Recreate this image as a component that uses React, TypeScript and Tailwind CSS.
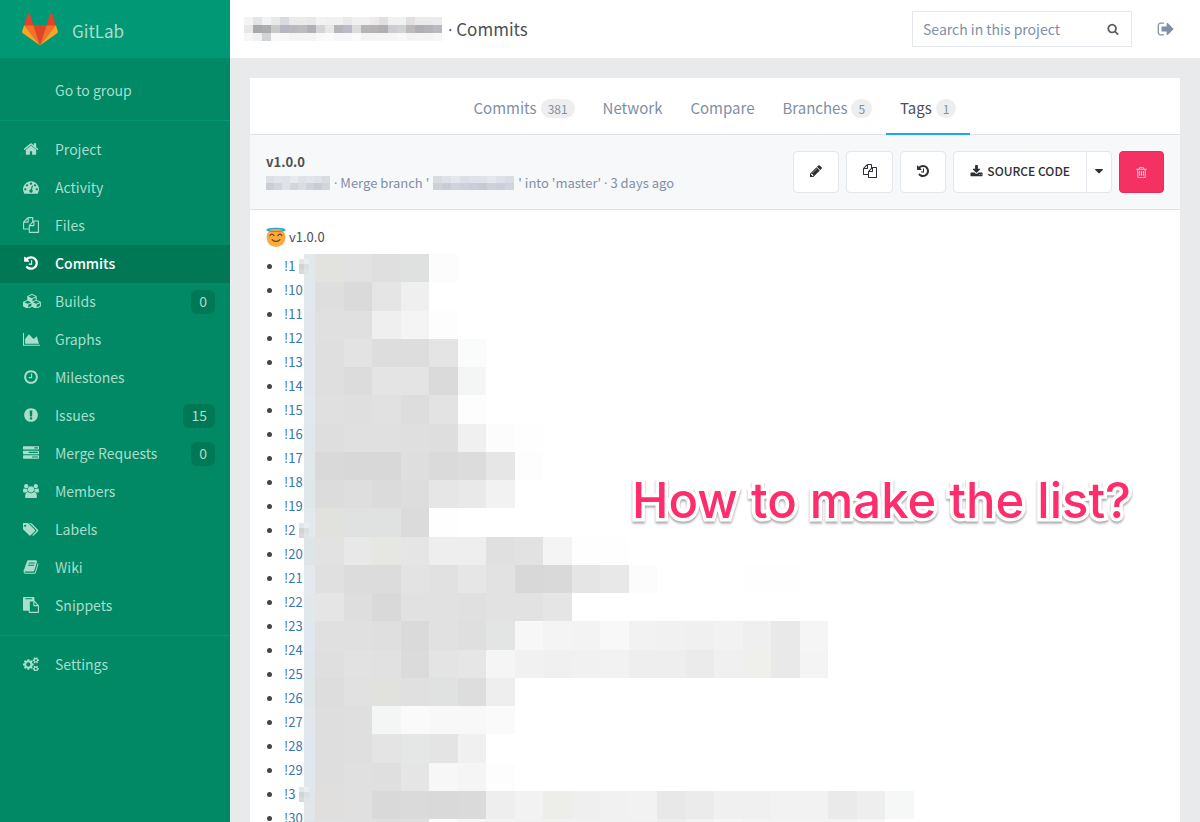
import React from "react";

type Glyph = { box: string; w: string; d: string };

const sq = "0 0 1792 1792";

const glyphs: Record<string, Glyph> = {
  home: { box: sq, w: "w-4", d: "M1472 992v480q0 26-19 45t-45 19h-384v-384h-256v384h-384q-26 0-45-19t-19-45v-480q0-1 .5-3t.5-3l575-474 575 474q1 2 1 6zm223-69l-62 74q-8 9-21 11h-3q-13 0-21-7l-692-577-692 577q-12 8-24 7-13-2-21-11l-62-74q-8-10-7-23.5t11-21.5l719-599q32-26 76-26t76 26l244 204v-195q0-14 9-23t23-9h192q14 0 23 9t9 23v408l219 182q10 8 11 21.5t-7 23.5z" },
  dashboard: { box: sq, w: "w-4", d: "M384 1152q0-53-37.5-90.5t-90.5-37.5-90.5 37.5-37.5 90.5 37.5 90.5 90.5 37.5 90.5-37.5 37.5-90.5zm192-448q0-53-37.5-90.5t-90.5-37.5-90.5 37.5-37.5 90.5 37.5 90.5 90.5 37.5 90.5-37.5 37.5-90.5zm428 481l101-382q6-26-7.5-48.5t-38.5-29.5-48 6.5-30 39.5l-101 382q-60 5-107 43.500t-63 98.500q-20 77 20 146t117 89 146-20 89-117q16-60-6-117t-72-91zm660-33q0-53-37.5-90.5t-90.5-37.5-90.5 37.5-37.5 90.5 37.5 90.5 90.5 37.5 90.5-37.5 37.5-90.5zm-640-640q0-53-37.5-90.5t-90.5-37.5-90.5 37.5-37.5 90.5 37.5 90.5 90.5 37.5 90.5-37.5 37.5-90.5zm448 192q0-53-37.5-90.5t-90.5-37.5-90.5 37.5-37.5 90.5 37.5 90.5 90.5 37.5 90.5-37.5 37.5-90.5zm320 448q0 261-141 483-19 29-54 29h-1402q-35 0-54-29-141-221-141-483 0-182 71-348t191-286 286-191 348-71 348 71 286 191 191 286 71 348z" },
  files: { box: sq, w: "w-4", d: "M1696 384q40 0 68 28t28 68v1216q0 40-28 68t-68 28h-960q-40 0-68-28t-28-68v-288h-544q-40 0-68-28t-28-68v-672q0-40 20-88t48-76l408-408q28-28 76-48t88-20h416q40 0 68 28t28 68v328q68-40 128-40h416zm-544 213l-299 299h299v-299zm-640-384l-299 299h299v-299zm196 647l316-316v-416h-384v416q0 40-28 68t-68 28h-416v640h512v-256q0-40 20-88t48-76zm956 804v-1152h-384v416q0 40-28 68t-68 28h-416v640h896z" },
  history: { box: sq, w: "w-4", d: "M1664 896q0 156-61 298t-164 245-245 164-298 61q-172 0-327-72.5t-264-204.5q-7-10-6.5-22.5t8.5-20.5l137-138q10-9 25-9 16 2 23 12 73 95 179 147t225 52q104 0 198.5-40.5t163.5-109.5 109.5-163.5 40.5-198.5-40.5-198.5-109.5-163.5-163.5-109.5-198.5-40.5q-98 0-188 35.5t-160 101.5l137 138q31 30 14 69-17 40-59 40h-448q-26 0-45-19t-19-45v-448q0-42 40-59 39-17 69 14l130 129q107-101 244.5-156.5t284.5-55.5q156 0 298 61t245 164 164 245 61 298zm-640-288v448q0 14-9 23t-23 9h-320q-14 0-23-9t-9-23v-64q0-14 9-23t23-9h224v-352q0-14 9-23t23-9h64q14 0 23 9t9 23z" },
  cubes: { box: "0 0 2304 1792", w: "w-[19px]", d: "M640 1632l384-192v-314l-384 164v342zm-64-454l404-173-404-173-404 173zm1088 454l384-192v-314l-384 164v342zm-64-454l404-173-404-173-404 173zm-448-293l384-165v-266l-384 164v267zm-64-379l441-189-441-189-441 189zm1088 518v416q0 36-19 67t-52 47l-448 224q-25 14-57 14t-57-14l-448-224q-4-2-7-4-2 2-7 4l-448 224q-25 14-57 14t-57-14l-448-224q-33-16-52-47t-19-67v-416q0-38 21.500-70t56.500-48l434-186v-400q0-38 21.500-70t56.500-48l448-192q23-10 50-10t50 10l448 192q35 16 56.500 48t21.500 70v400l434 186q36 16 57 48t21 70z" },
  chart: { box: "0 0 2048 1792", w: "w-[17px]", d: "M2048 1536v128h-2048v-1536h128v1408h1920zm-384-1024l256 896h-1664v-576l448-576 576 576z" },
  clock: { box: sq, w: "w-4", d: "M1024 544v448q0 14-9 23t-23 9h-320q-14 0-23-9t-9-23v-64q0-14 9-23t23-9h224v-352q0-14 9-23t23-9h64q14 0 23 9t9 23zm416 352q0-148-73-273t-198-198-273-73-273 73-198 198-73 273 73 273 198 198 273 73 273-73 198-198 73-273zm224 0q0 209-103 385.500t-279.500 279.500-385.500 103-385.500-103-279.500-279.500-103-385.500 103-385.500 279.500-279.500 385.500-103 385.500 103 279.500 279.500 103 385.500z" },
  exclamation: { box: sq, w: "w-4", d: "M896 128q209 0 385.500 103t279.500 279.500 103 385.500-103 385.500-279.500 279.500-385.500 103-385.500-103-279.500-279.500-103-385.500 103-385.500 279.500-279.500 385.500-103zm128 1247v-190q0-14-9-23.500t-22-9.500h-192q-13 0-23 10t-10 23v190q0 13 10 23t23 10h192q13 0 22-9.500t9-23.500zm-2-344l18-621q0-12-10-18-10-8-24-8h-220q-14 0-24 8-10 6-10 18l17 621q0 10 10 17.500t24 7.500h185q14 0 23.500-7.500t10.500-17.500z" },
  tasks: { box: sq, w: "w-4", d: "M1024 1408h640v-128h-640v128zm-384-512h1024v-128h-1024v128zm640-512h384v-128h-384v128zm512 832v256q0 26-19 45t-45 19h-1664q-26 0-45-19t-19-45v-256q0-26 19-45t45-19h1664q26 0 45 19t19 45zm0-512v256q0 26-19 45t-45 19h-1664q-26 0-45-19t-19-45v-256q0-26 19-45t45-19h1664q26 0 45 19t19 45zm0-512v256q0 26-19 45t-45 19h-1664q-26 0-45-19t-19-45v-256q0-26 19-45t45-19h1664q26 0 45 19t19 45z" },
  group: { box: "-64 0 1920 1792", w: "w-4", d: "M529 896q-162 5-265 128h-134q-82 0-138-40.500t-56-118.500q0-353 124-353 6 0 43.500 21t97.500 42.500 119 21.500q67 0 133-23-5 37-5 66 0 139 81 256zm1071 637q0 120-73 189.500t-194 69.500h-874q-121 0-194-69.500t-73-189.500q0-53 3.500-103.500t14-109 26.500-108.500 43-97.500 62-81 85.500-53.500 111.500-20q10 0 43 21.500t73 48 107 48 135 21.500 135-21.500 107-48 73-48 43-21.500q61 0 111.500 20t85.500 53.500 62 81 43 97.500 26.500 108.500 14 109 3.500 103.500zm-1024-1277q0 106-75 181t-181 75-181-75-75-181 75-181 181-75 181 75 75 181zm704 384q0 159-112.500 271.500t-271.500 112.500-271.500-112.500-112.500-271.500 112.500-271.500 271.500-112.500 271.500 112.500 112.500 271.500zm576 225q0 78-56 118.500t-138 40.500h-134q-103-123-265-128 81-117 81-256 0-29-5-66 66 23 133 23 59 0 119-21.500t97.500-42.500 43.500-21q124 0 124 353zm-128-609q0 106-75 181t-181 75-181-75-75-181 75-181 181-75 181 75 75 181z" },
  tags: { box: "0 0 1920 1792", w: "w-4", d: "M384 448q0-53-37.500-90.500t-90.500-37.500-90.500 37.500-37.500 90.500 37.500 90.500 90.500 37.500 90.500-37.500 37.500-90.500zm1067 576q0 53-37 90l-491 492q-39 37-91 37-53 0-90-37l-715-716q-38-37-64.500-101t-26.500-117v-416q0-52 38-90t90-38h416q53 0 117 26.500t102 64.500l715 714q37 39 37 91zm384 0q0 53-37 90l-491 492q-39 37-91 37-36 0-59-14t-53-45l470-470q37-37 37-90 0-52-37-91l-715-714q-38-38-102-64.500t-117-26.500h224q53 0 117 26.500t102 64.500l715 714q37 39 37 91z" },
  book: { box: sq, w: "w-4", d: "M1703 478q40 57 18 129l-275 906q-19 64-76.500 107.500t-122.500 43.500h-923q-77 0-148.500-53.500t-99.500-131.500q-24-67-2-127 0-4 3-27t4-37q1-8-3-21.500t-3-19.500q2-11 8-21t16.500-23.500 16.500-23.500q23-38 45-91.500t30-91.500q3-10 .5-30t-.5-28q3-11 17-28t17-23q21-36 42-92t25-90q1-9-2.500-32t.5-28q4-13 22-30.500t22-22.500q19-26 42.500-84.500t27.500-96.500q1-8-3-25.500t-2-26.500q2-8 9-18t18-23 17-21q8-12 16.500-30.500t15-35 16-36 19.500-32 26.500-23.500 36-11.500 47.500 5.500l-1 3q38-9 51-9h761q74 0 114 56t18 130l-274 906q-36 119-71.500 153.500t-128.500 34.500h-869q-27 0-38 15-11 16-1 43 24 70 144 70h923q29 0 56-15.500t35-41.500l300-987q7-22 5-57 38 15 59 43zm-1064 2q-4 13 2 22.500t20 9.500h608q13 0 25.500-9.500t16.500-22.500l21-64q4-13-2-22.500t-20-9.500h-608q-13 0-25.500 9.500t-16.500 22.500zm-83 256q-4 13 2 22.500t20 9.500h608q13 0 25.500-9.500t16.500-22.500l21-64q4-13-2-22.500t-20-9.500h-608q-13 0-25.500 9.500t-16.500 22.500z" },
  paste: { box: sq, w: "w-4", d: "M768 1664h896v-640h-416q-40 0-68-28t-28-68v-416h-384v1152zm256-1440v-64q0-13-9.500-22.500t-22.500-9.500h-704q-13 0-22.500 9.500t-9.500 22.500v64q0 13 9.500 22.500t22.500 9.500h704q13 0 22.500-9.500t9.500-22.500zm256 672h299l-299-299v299zm512 128v672q0 40-28 68t-68 28h-960q-40 0-68-28t-28-68v-160h-544q-40 0-68-28t-28-68v-1344q0-40 28-68t68-28h1088q40 0 68 28t28 68v328q21 13 36 28l408 408q28 28 48 76t20 88z" },
  cogs: { box: "0 0 1920 1792", w: "w-4", d: "M896 896q0-106-75-181t-181-75-181 75-75 181 75 181 181 75 181-75 75-181zm768 512q0-52-38-90t-90-38-90 38-38 90q0 53 37.500 90.500t90.500 37.500 90.500-37.500 37.500-90.500zm0-1024q0-52-38-90t-90-38-90 38-38 90q0 53 37.500 90.500t90.500 37.500 90.500-37.500 37.500-90.500zm-384 421v185q0 10-7 19.500t-16 10.500l-155 24q-11 35-32 76 34 48 90 115 7 11 7 20 0 12-7 19-23 30-82.500 89.500t-78.500 59.500q-11 0-21-7l-115-90q-37 19-77 31-11 108-23 155-7 24-30 24h-186q-11 0-20-7.500t-10-17.500l-23-153q-34-10-75-31l-118 89q-7 7-20 7-11 0-21-8-144-133-144-160 0-9 7-19 10-14 41-53t47-61q-23-44-35-82l-152-24q-10-1-17-9.500t-7-19.500v-185q0-10 7-19.500t16-10.500l155-24q11-35 32-76-34-48-90-115-7-11-7-20 0-12 7-20 22-30 82-89t79-59q11 0 21 7l115 90q34-18 77-32 11-108 23-154 7-24 30-24h186q11 0 20 7.500t10 17.500l23 153q34 10 75 31l118-89q8-7 20-7 11 0 21 8 144 133 144 160 0 8-7 19-12 16-42 54t-45 60q23 48 34 82l152 23q10 2 17 10.500t7 19.500zm640 533v140q0 16-149 31-12 27-30 52 51 113 51 138 0 4-4 7-122 71-124 71-8 0-46-47t-52-68q-20 2-30 2t-30-2q-14 21-52 68t-46 47q-2 0-124-71-4-3-4-7 0-25 51-138-18-25-30-52-149-15-149-31v-140q0-16 149-31 13-29 30-52-51-113-51-138 0-4 4-7 4-2 35-20t59-34 30-16q8 0 46 46.500t52 67.500q20-2 30-2t30 2q51-71 92-112l6-2q4 0 124 70 4 3 4 7 0 25-51 138 17 23 30 52 149 15 149 31zm0-1024v140q0 16-149 31-12 27-30 52 51 113 51 138 0 4-4 7-122 71-124 71-8 0-46-47t-52-68q-20 2-30 2t-30-2q-14 21-52 68t-46 47q-2 0-124-71-4-3-4-7 0-25 51-138-18-25-30-52-149-15-149-31v-140q0-16 149-31 13-29 30-52-51-113-51-138 0-4 4-7 4-2 35-20t59-34 30-16q8 0 46 46.500t52 67.500q20-2 30-2t30 2q51-71 92-112l6-2q4 0 124 70 4 3 4 7 0 25-51 138 17 23 30 52 149 15 149 31z" },
  signOut: { box: sq, w: "w-[18px]", d: "M704 1440q0 4 1 20t.5 26.500-3 23.500-10 19.500-20.500 6.500h-320q-119 0-203.500-84.500t-84.500-203.500v-704q0-119 84.500-203.500t203.500-84.500h320q13 0 22.500 9.500t9.500 22.500q0 4 1 20t.5 26.500-3 23.500-10 19.500-20.500 6.500h-320q-66 0-113 47t-47 113v704q0 66 47 113t113 47h312l11.500 1 11.500 3 8 5.500 7 9 2 13.500zm928-544q0 26-19 45l-544 544q-19 19-45 19t-45-19-19-45v-288h-448q-26 0-45-19t-19-45v-384q0-26 19-45t45-19h448v-288q0-26 19-45t45-19 45 19l544 544q19 19 19 45z" },
  search: { box: sq, w: "w-3", d: "M1216 832q0-185-131.500-316.500t-316.500-131.500-316.500 131.500-131.500 316.500 131.500 316.500 316.500 131.500 316.500-131.500 131.500-316.500zm512 832q0 52-38 90t-90 38q-54 0-90-38l-343-342q-179 124-399 124-143 0-273.500-55.500t-225-150-150-225-55.500-273.500 55.500-273.500 150-225 225-150 273.500-55.500 273.500 55.500 225 150 150 225 55.500 273.500q0 220-124 399l343 343q37 37 37 90z" },
  pencil: { box: sq, w: "w-3.5", d: "M491 1536l91-91-235-235-91 91v107h128v128h107zm523-928q0-22-22-22-10 0-17 7l-542 542q-7 7-7 17 0 22 22 22 10 0 17-7l542-542q7-7 7-17zm-54-192l416 416-832 832h-416v-416zm683 96q0 53-37 90l-166 166-416-416 166-165q36-38 90-38 53 0 91 38l235 234q37 39 37 91z" },
  trash: { box: sq, w: "w-3.5", d: "M704 736v576q0 14-9 23t-23 9h-64q-14 0-23-9t-9-23v-576q0-14 9-23t23-9h64q14 0 23 9t9 23zm256 0v576q0 14-9 23t-23 9h-64q-14 0-23-9t-9-23v-576q0-14 9-23t23-9h64q14 0 23 9t9 23zm256 0v576q0 14-9 23t-23 9h-64q-14 0-23-9t-9-23v-576q0-14 9-23t23-9h64q14 0 23 9t9 23zm128 724v-948h-896v948q0 22 7 40.500t14.500 27 10.500 8.500h832q3 0 10.500-8.500t14.500-27 7-40.500zm-672-1076h448l-48-117q-7-9-17-11h-317q-10 2-17 11zm928 32v64q0 14-9 23t-23 9h-96v948q0 83-47 143.500t-113 60.500h-832q-66 0-113-58.500t-47-141.500v-952h-96q-14 0-23-9t-9-23v-64q0-14 9-23t23-9h309l70-167q15-37 54-63t79-26h320q40 0 79 26t54 63l70 167h309q14 0 23 9t9 23z" },
  download: { box: sq, w: "w-3.5", d: "M1344 1344q0-26-19-45t-45-19-45 19-19 45 19 45 45 19 45-19 19-45zm256 0q0-26-19-45t-45-19-45 19-19 45 19 45 45 19 45-19 19-45zm128-224v320q0 40-28 68t-68 28h-1472q-40 0-68-28t-28-68v-320q0-40 28-68t68-28h465l135 136q58 56 136 56t136-56l136-136h464q40 0 68 28t28 68zm-325-569q17 41-14 70l-448 448q-18 19-45 19t-45-19l-448-448q-31-29-14-70 17-39 59-39h256v-448q0-26 19-45t45-19h256q26 0 45 19t19 45v448h256q42 0 59 39z" },
  caret: { box: sq, w: "w-3.5", d: "M1408 704q0 26-19 45l-448 448q-19 19-45 19t-45-19l-448-448q-19-19-19-45t19-45 45-19h896q26 0 45 19t19 45z" },
};

function Icon({ name, width }: { name: string; width?: string }) {
  const g = glyphs[name];
  return (
    <svg viewBox={g.box} className={`${width ?? g.w} shrink-0 fill-current`} aria-hidden="true">
      <path d={g.d} />
    </svg>
  );
}

type Nav = { label: string; icon: string; count?: number; active?: boolean };

const nav: Nav[] = [
  { label: "Project", icon: "home" },
  { label: "Activity", icon: "dashboard" },
  { label: "Files", icon: "files" },
  { label: "Commits", icon: "history", active: true },
  { label: "Builds", icon: "cubes", count: 0 },
  { label: "Graphs", icon: "chart" },
  { label: "Milestones", icon: "clock" },
  { label: "Issues", icon: "exclamation", count: 15 },
  { label: "Merge Requests", icon: "tasks", count: 0 },
  { label: "Members", icon: "group" },
  { label: "Labels", icon: "tags" },
  { label: "Wiki", icon: "book" },
  { label: "Snippets", icon: "paste" },
];

function NavItem({ item }: { item: Nav }) {
  return (
    <li>
      <a
        href="#"
        className={`flex h-[38px] items-center pr-[15px] pb-0.5 pl-[23px] ${item.active ? "bg-[#017855] font-medium text-white" : ""}`}
      >
        <span className="flex w-8 shrink-0">
          <Icon name={item.icon} />
        </span>
        <span className="flex-1">{item.label}</span>
        {item.count !== undefined && (
          <span className="mt-0.5 rounded-md bg-[#017855] px-2 pb-0.5 leading-[22px]">{item.count}</span>
        )}
      </a>
    </li>
  );
}

function Logo() {
  return (
    <svg viewBox="0 0 36 33" className="w-9" aria-hidden="true">
      <path fill="#e24329" d="M18 32.500l6.600-20.300H11.400z" />
      <path fill="#fc6d26" d="M18 32.500L11.400 12.200H2.100zM18 32.500l6.600-20.300h9.300z" />
      <path fill="#fca326" d="M2.100 12.200L.1 18.400c-.2.600 0 1.200.5 1.500L18 32.500zM33.900 12.200l2 6.200c.2.600 0 1.200-.5 1.500L18 32.500z" />
      <path fill="#e24329" d="M2.100 12.200h9.300L7.400 0c-.2-.6-1.100-.6-1.300 0zM33.900 12.200h-9.300L28.600 0c.2-.6 1.100-.6 1.300 0z" />
    </svg>
  );
}

type MosaicProps = { rows: string[]; cw: number; ch: number; className: string };

/* Censored text: every row is a list of cell shades, two digits for a grey. */
function Mosaic({ rows, cw, ch, className }: MosaicProps) {
  const cells = rows.map((r) => r.split(" "));
  const cols = Math.max(...cells.map((r) => r.length));
  const w = cols * cw;
  const h = rows.length * ch;
  return (
    <svg width={w} height={h} viewBox={`0 0 ${w} ${h}`} shapeRendering="crispEdges" className={`shrink-0 ${className}`} aria-hidden="true">
      {cells.map((row, y) =>
        row.map((c, x) =>
          c === "--" ? null : (
            <rect key={`${x}-${y}`} x={x * cw} y={y * ch} width={cw} height={ch} fill={`#${c.length === 2 ? c + c + c : c}`} />
          ),
        ),
      )}
    </svg>
  );
}

function Dot() {
  return <span className="font-['Open_Sans',sans-serif] leading-none">·</span>;
}

const listShades = [
  "e2e2df e2 df dfe1e0 fc",
  "de da e5 ef",
  "e0 e0 ef f4 fd",
  "df e3 dd dd e4 fafcfb",
  "df dc e4 e4 da f4f6f5",
  "e0 df e1 dd e3 fd",
  "de e0 e0 df de f0 fc fe",
  "d9 d8 d8 de da dc e6 fd",
  "dc de db dd e6 e9 f2",
  "e1e1dd e0e2e1 e0e2e1 db fe",
  "e2 e8 e6e6e3 e5 ee ee e0 e2 f4 fe fe",
  "e0 dc dc e3 e1 e6 e2 d8 d9 e5 e8 fc -- -- -- fe fe",
  "e5 de d9 e1 e1 e0 e2 e2 e5",
  "e0 e0 df da e1 df e2e5e3 f7 f4 f3 f8 f2 f1 f0 f2 ef e9 f5",
  "df e2 e1 db e4 e6 f5 f1 f0 f1 f2 ee ee eb f0 efefeb e9 f4",
  "dd e1 e1e1de e0 e0e2e1 dd ee",
  "de df f4f6f5 fa f8 f8 fa",
  "de df e4 e5e7e6 e4 f0",
  "de e0 df e5 f7 f5 fd",
  "e1dfde e0 d9 da d9 da ee f2 ededea ef f1 f2 e8 eb f0 f0 f2 f2 ea ee f6f8f7",
  "e0 e0 df df fb f6 f4 f1 f1 f1 f1 f1 ee f2 f6 f3 f3 f3 f3 f6",
];

const edgeShades = [
  "e3e8eb", "e3e8ec", "e3e7eb", "e3e7ed", "e3e7eb", "e3e8ec", "e2e7eb", "e2e8ea", "e1e6e9", "e4e9ed",
  "dfe4e7", "e5e9ee", "e2e7ea", "e2e6ee", "e1e5ec", "e1e6e9", "e3e7ec", "e2e6ef", "e2e7eb", "e2e6e9", "e0e5e9",
];

const titleShades = [
  "f4 e3e4e6 f1f3f3 e8 d9dadf eb eb e8 f3 f1 f1 ea f1 f1 eb e1dfe0 f0f2f2 f1 e1dfe0 eb eb ec",
  "e8 a9a9ab adadb0 c9 b6b7c1 b8b8bf bdbbbd b1b0b2 d3d5d8 e8 b5b5ba b9bcc6 dc b6b4b5 b5b3b5 b1afb1 cbcdd0 d0d2d4 bdbabc b1afb1 b4b3b7 b8b9c1",
  "f7 f1 d1d4d6 f9 f8 f4 f4 f4 f9 fb f7 f7 fb f4 f5 f5 f6 f8 f4 f4 f5 f7",
];

const authorShades = [
  "dcdfe6 e2e4ea dfe3e8 e9ebee dfe2e7 e3e5ec dfe2e9 d9dce3",
  "cbced7 d2d5dd dfe2e7 d3d6de dadde3 cfd2db c9ccd5 d2d5de",
];

const branchShades = [
  "d9dbe2 dfe1e8 e5e7ec dcdfe6 dfe2e8 e1e3ea e5e7ec dfe1e8 d9dce4",
  "cdd1d9 c8ccd5 cfd3dc cdd0da c9cdd6 c6cad3 ced1da cbced8 d1d4dd",
];

const smudgeShades = ["e3e6e6 eceeee", "cfd4d4 dbdfdf", "d6dada e0e4e6"];

const refs = ["!1", "!10", "!11", "!12", "!13", "!14", "!15", "!16", "!17", "!18", "!19", "!2", "!20", "!21", "!22", "!23", "!24", "!25", "!26", "!27", "!28", "!29", "!3", "!30"];

const smudged = ["!1", "!2", "!3"];

const tabs = [
  { label: "Commits", count: "381" },
  { label: "Network" },
  { label: "Compare" },
  { label: "Branches", count: "5" },
  { label: "Tags", count: "1", active: true },
];

function Halo() {
  return (
    <svg viewBox="0 0 20 20" className="w-5" role="img" aria-label="innocent">
      <circle cx="10" cy="10.500" r="9.500" fill="#fbab3b" />
      <path d="M10 .8c5 0 9.700.8 9.700 2.100S15 5 10 5 .3 4.200.3 2.900 5 .8 10 .8z" fill="#2fa5da" />
      <path d="M10 1.900c3.500 0 6.200.4 6.200 1S13.500 3.900 10 3.900 3.800 3.500 3.800 2.900 6.500 1.900 10 1.900z" fill="#f0a341" />
      <path d="M3.900 8.700q1.800-3 4 0M11.900 8.700q2.200-3 4 0M6.200 12.700q3.800 3.400 7.600 0" fill="none" stroke="#6b4420" strokeWidth="1.200" strokeLinecap="round" />
    </svg>
  );
}

const btn = "flex h-[42px] items-center justify-center rounded-sm border border-[#e3e6eb] bg-white pb-0.5 text-[#2d2f33]";

export default function App() {
  return (
    <div className="flex h-screen overflow-hidden bg-[#e9eaec] font-['Noto_Sans_CJK_SC',sans-serif] text-[13px] text-[#4c4e54]">
      <aside className="flex w-[230px] shrink-0 flex-col bg-[#018865] text-sm text-[#aaddcc]">
        <a href="#" className="flex h-[58px] shrink-0 items-center gap-3.5 bg-[#019875] pl-[22px] text-[17px]">
          <Logo />
          <span className="pt-1">GitLab</span>
        </a>
        <nav>
          <div className="border-b border-[#019875] py-[13px]">
            <a href="#" className="flex h-9 items-center pt-0.5 pl-[55px]">Go to group</a>
          </div>
          <ul className="border-b border-[#019875] py-2.5">
            {nav.map((n) => (
              <NavItem key={n.label} item={n} />
            ))}
          </ul>
          <ul className="py-2.5">
            <NavItem item={{ label: "Settings", icon: "cogs" }} />
          </ul>
        </nav>
      </aside>

      <div className="flex min-w-0 flex-1 flex-col">
        <header className="flex h-[58px] shrink-0 items-center justify-between bg-white pr-[25px] pl-3.5">
          <h1 className="flex items-center gap-1.5 text-[17px] leading-6">
            <Mosaic rows={titleShades} cw={9} ch={8} className="" />
            <span><Dot /> Commits</span>
          </h1>
          <form className="flex items-center gap-[25px]" onSubmit={(e) => e.preventDefault()}>
            <label className="flex h-9 w-[220px] items-center border border-[#e3e6eb] pr-3 pl-2.5 text-[#5c5d5e]">
              <input
                type="search"
                aria-label="Search in this project"
                placeholder="Search in this project"
                className="min-w-0 flex-1 text-sm outline-none placeholder:text-[#7f8fa4]"
              />
              <Icon name="search" />
            </label>
            <a href="#" aria-label="Sign out" className="text-[#7f8fa4]">
              <Icon name="signOut" />
            </a>
          </form>
        </header>

        <main className="min-h-0 flex-1 overflow-y-auto p-5 [scrollbar-width:none]">
          <div className="bg-white">
            <ul className="flex h-[57px] justify-center border-b border-[#dfe2e7] text-[15px] text-[#7f8fa4]">
              {tabs.map((t) => (
                <li key={t.label} className="flex">
                  <a
                    href="#"
                    className={`-mb-px flex items-center gap-1 border-b-2 px-3.5 pt-1.5 ${t.active ? "border-[#1ba9f5] text-[#4c4e54]" : "border-transparent"}`}
                  >
                    {t.label}
                    {t.count && (
                      <span className="rounded-full bg-[#eee] px-[7px] text-xs leading-[19px] text-[#7f8fa4]">{t.count}</span>
                    )}
                  </a>
                </li>
              ))}
            </ul>

            <div className="flex items-center justify-between border-b border-[#dfe2e7] bg-[#f7f8fa] px-4 py-4">
              <div>
                <div className="leading-[21px] font-bold">v1.0.0</div>
                <div className="flex items-center leading-[21px] text-[#7f8fa4]">
                  <Mosaic rows={authorShades} cw={8} ch={7} className="mr-1" />
                  <span><Dot /> Merge branch '</span>
                  <Mosaic rows={branchShades} cw={9} ch={7} className="mx-1" />
                  <span>' into 'master' <Dot /> 3 days ago</span>
                </div>
              </div>
              <div className="flex gap-[7px]">
                <button type="button" aria-label="Edit release notes" className={`${btn} w-[46px]`}>
                  <Icon name="pencil" />
                </button>
                <button type="button" aria-label="Browse files" className={`${btn} w-[47px]`}>
                  <Icon name="files" width="w-3.5" />
                </button>
                <button type="button" aria-label="Browse commits" className={`${btn} w-[46px]`}>
                  <Icon name="history" width="w-3.5" />
                </button>
                <div className="flex">
                  <button type="button" className={`${btn} gap-1 rounded-r-none px-4 text-xs font-medium`}>
                    <Icon name="download" width="w-[13px]" />
                    SOURCE CODE
                  </button>
                  <button type="button" aria-label="Select archive format" className={`${btn} -ml-px w-[26px] rounded-l-none`}>
                    <Icon name="caret" />
                  </button>
                </div>
                <button type="button" aria-label="Delete tag" className="flex h-[42px] w-[45px] items-center justify-center rounded-sm border border-[#e52c5a] bg-[#f53164] text-white/80">
                  <Icon name="trash" width="w-[13px]" />
                </button>
              </div>
            </div>

            <div className="relative px-4 pt-[15px] pb-6">
              <p className="flex h-6 items-center gap-[3px]">
                <Halo />
                v1.0.0
              </p>
              <ul className="relative pt-[5px]">
                {refs.map((r) => (
                  <li key={r} className="flex h-6 items-center">
                    <span className="mr-3 ml-px h-[5px] w-[5px] rounded-full bg-[#444]" />
                    <a href="#" className="text-[#3777b0]">{r}</a>
                    {smudged.includes(r) && (
                      <Mosaic rows={smudgeShades} cw={5} ch={5} className="relative z-10 ml-1" />
                    )}
                  </li>
                ))}
                <li aria-hidden="true" className="absolute top-[5px] left-[38px] flex">
                  <Mosaic rows={edgeShades} cw={11} ch={28.25} className="" />
                  <Mosaic rows={listShades} cw={28.5} ch={28.25} className="" />
                </li>
              </ul>
              <strong className="absolute top-[266px] left-[382px] font-['Inter',sans-serif] text-[49px] leading-none font-medium whitespace-nowrap text-[#ff2d6b] drop-shadow-[0_2px_1px_rgba(0,0,0,0.35)] [-webkit-text-stroke:7px_white] [paint-order:stroke_fill] [stroke-linejoin:round]">
                How to make the list?
              </strong>
            </div>
          </div>
        </main>
      </div>
    </div>
  );
}
